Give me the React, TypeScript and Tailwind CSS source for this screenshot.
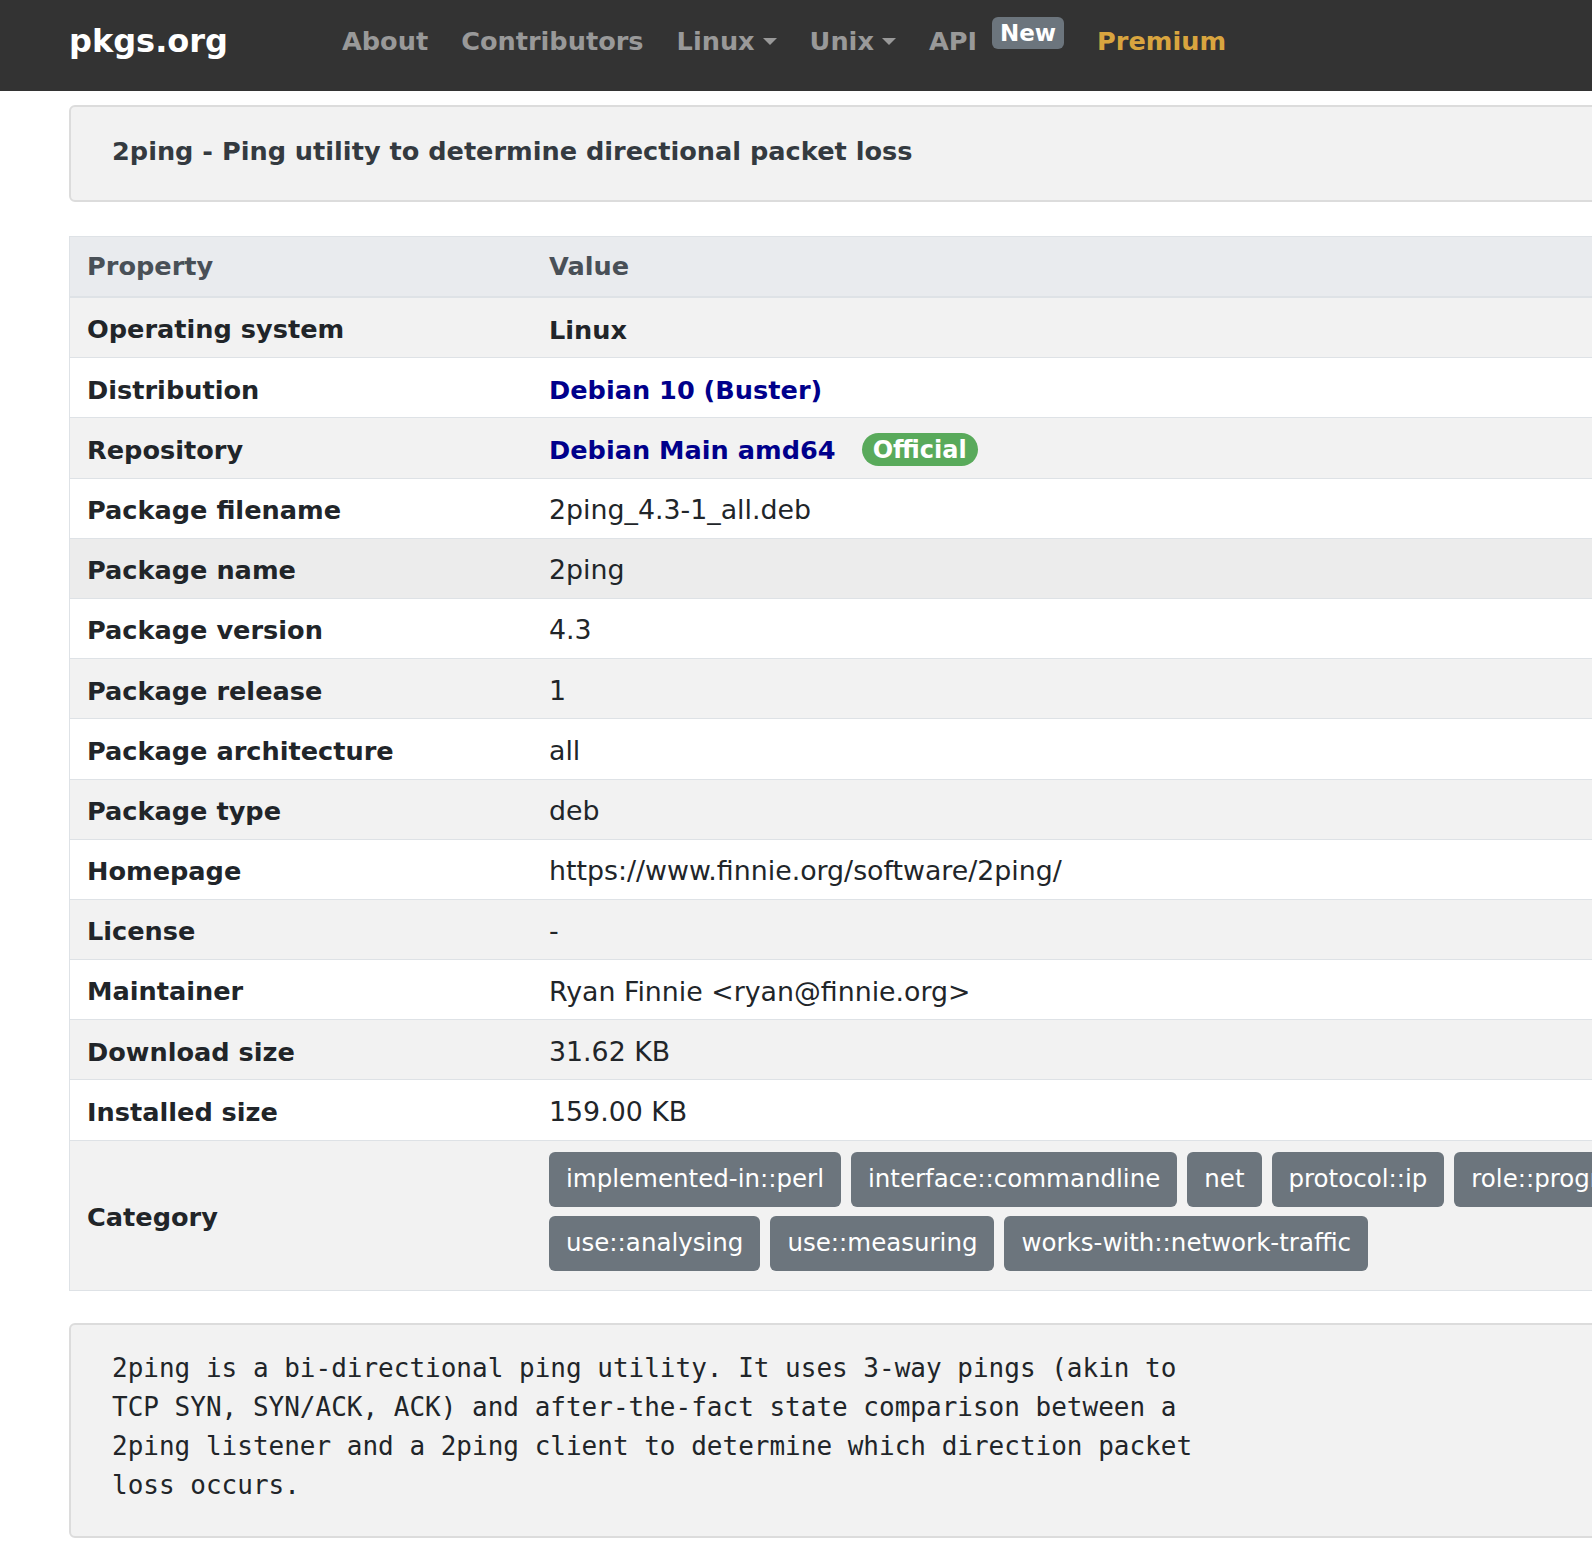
const font = { fontFamily: '"DejaVu Sans", Verdana, sans-serif' };

type Row = { label: string; value: React.ReactNode; tone: 'gray' | 'white' | 'hover' };

function Caret() {
    return (
        <span className="ml-[8px] inline-block h-0 w-0 border-x-[7.5px] border-t-[7.5px] border-x-transparent border-t-[#999999] translate-y-[1px]" />
    );
}

const tags = [
    'implemented-in::perl',
    'interface::commandline',
    'net',
    'protocol::ip',
    'role::program',
    'use::analysing',
    'use::measuring',
    'works-with::network-traffic',
];

const rows: Row[] = [
    { label: 'Operating system', value: <span className="font-bold text-[25.6px]">Linux</span>, tone: 'gray' },
    {
        label: 'Distribution',
        value: <a className="font-bold text-[25.6px] text-[#00008b]">Debian 10 (Buster)</a>,
        tone: 'white',
    },
    {
        label: 'Repository',
        value: (
            <span className="flex items-center">
                <a className="font-bold text-[25.6px] text-[#00008b]">Debian Main amd64</a>
                <span className="ml-[26px] flex h-[33px] items-center rounded-full bg-[#59aa5b] px-[11px] text-[24px] font-bold text-white">
                    Official
                </span>
            </span>
        ),
        tone: 'gray',
    },
    { label: 'Package filename', value: '2ping_4.3-1_all.deb', tone: 'white' },
    { label: 'Package name', value: '2ping', tone: 'hover' },
    { label: 'Package version', value: '4.3', tone: 'white' },
    { label: 'Package release', value: '1', tone: 'gray' },
    { label: 'Package architecture', value: 'all', tone: 'white' },
    { label: 'Package type', value: 'deb', tone: 'gray' },
    { label: 'Homepage', value: 'https://www.finnie.org/software/2ping/', tone: 'white' },
    { label: 'License', value: '-', tone: 'gray' },
    { label: 'Maintainer', value: 'Ryan Finnie <ryan@finnie.org>', tone: 'white' },
    { label: 'Download size', value: '31.62 KB', tone: 'gray' },
    { label: 'Installed size', value: '159.00 KB', tone: 'white' },
];

const toneClass = {
    gray: 'bg-[#f2f2f2]',
    white: 'bg-white',
    hover: 'bg-[#ececec]',
};

export default function App() {
    return (
        <div className="w-full min-h-screen overflow-hidden bg-white text-[#212529]" style={font}>
            <nav className="flex h-[91px] items-center bg-[#333333] pb-[9px] pl-[69px]">
                <a className="text-[32px] font-bold leading-none text-white">pkgs.org</a>
                <ul className="ml-[114px] flex items-center gap-[33px] text-[25.6px] font-bold text-[#999999]">
                    <li>About</li>
                    <li>Contributors</li>
                    <li className="flex items-center">
                        Linux
                        <Caret />
                    </li>
                    <li className="flex items-center">
                        Unix
                        <Caret />
                    </li>
                    <li className="flex items-center">
                        API
                        <span className="ml-[15px] -translate-y-[8px] rounded-[6px] bg-[#6c757d] px-[8px] text-[23px] leading-[32px] text-white">
                            New
                        </span>
                    </li>
                    <li className="text-[#d9a53f]">Premium</li>
                </ul>
            </nav>

            <main className="ml-[69px] mt-[14px] w-[1760px]">
                <div className="rounded-[6px] border-2 border-[#dcdcdc] bg-[#f2f2f2] px-[41px] pb-[33px] pt-[29px]">
                    <h1 className="text-[25.6px] font-bold leading-[31px] text-[#343a40]">
                        2ping - Ping utility to determine directional packet loss
                    </h1>
                </div>

                <div className="mt-[34px] border-l border-[#dee2e6]">
                    <div className="flex h-[62px] items-center border-y border-b-2 border-[#dee2e6] bg-[#e9ebee] text-[25.6px] font-bold text-[#495057]">
                        <div className="w-[461px] pl-[17px]">Property</div>
                        <div className="pl-[18px]">Value</div>
                    </div>
                    {rows.map((r) => (
                        <div
                            key={r.label}
                            className={`flex h-[60.2px] items-center border-b border-[#dee2e6] pt-[4px] ${toneClass[r.tone]}`}
                        >
                            <div className="w-[461px] pl-[17px] text-[25.6px] font-bold">{r.label}</div>
                            <div className="pl-[18px] text-[26.8px]">{r.value}</div>
                        </div>
                    ))}
                    <div className="flex h-[150px] border-b border-[#dee2e6] bg-[#f2f2f2]">
                        <div className="w-[461px] self-center pl-[17px] pt-[4px] text-[25.6px] font-bold">Category</div>
                        <div className="flex flex-1 flex-wrap content-start gap-x-[10px] gap-y-[9px] px-[18px] pt-[11px]">
                            {tags.map((t) => (
                                <span
                                    key={t}
                                    className="flex h-[55px] items-center rounded-[6px] bg-[#6c757d] px-[17px] text-[24.5px] text-white"
                                >
                                    {t}
                                </span>
                            ))}
                        </div>
                    </div>
                </div>

                <div className="mt-[32px] rounded-[6px] border-2 border-[#dcdcdc] bg-[#f2f2f2] px-[41px] pb-[31px] pt-[24px]">
                    <pre
                        className="text-[26px] leading-[39px] text-[#212529]"
                        style={{ fontFamily: '"DejaVu Sans Mono", monospace' }}
                    >
                        {`2ping is a bi-directional ping utility. It uses 3-way pings (akin to
TCP SYN, SYN/ACK, ACK) and after-the-fact state comparison between a
2ping listener and a 2ping client to determine which direction packet
loss occurs.`}
                    </pre>
                </div>
                <div className="h-[40px]" />
            </main>
        </div>
    );
}
